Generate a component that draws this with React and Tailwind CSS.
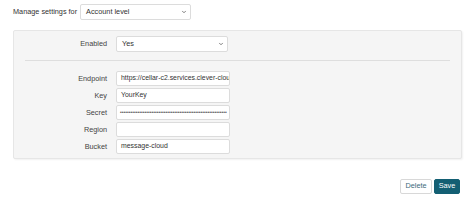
import { ChevronDown } from "lucide-react";

const Select = ({ value, width }) => (
  <div
    className={`flex items-center justify-between h-4 ${width} bg-white border border-[#dcdcdc] rounded-[2px] pl-[5px] pr-[3px] text-[#333]`}
  >
    <span>{value}</span>
    <ChevronDown className="w-[6px] h-[6px] text-[#555]" strokeWidth={3} />
  </div>
);

const Field = ({ label, value, secret }) => (
  <>
    <div className="text-right text-[#444] leading-[15px]">{label}</div>
    <div className="h-[15px] w-[114px] bg-white border border-[#dcdcdc] rounded-[2px] px-[2px] flex items-center overflow-hidden whitespace-nowrap text-[#333] text-[6.9px]">
      {secret ? (
        <span className="text-[5px] text-[#555] pl-[1px]">{"•".repeat(61)}</span>
      ) : (
        <span className="pl-[2px]">{value}</span>
      )}
    </div>
  </>
);

export default function App() {
  return (
    <div className="w-[474px] h-[209px] bg-white text-[7.3px] font-['Liberation_Sans',Arial,sans-serif] text-[#333] overflow-hidden">
      <div className="flex items-center gap-[3px] pl-[13px] pt-[4px]">
        <span className="text-[#333]">Manage settings for</span>
        <Select value="Account level" width="w-[111px]" />
      </div>

      <div className="mt-[10px] ml-[13px] w-[449px] bg-[#f5f5f5] border border-[#e6e6e6] rounded-[2px] shadow-[1px_1px_2px_rgba(0,0,0,0.06)] pt-[5px] pb-[4px]">
        <div className="grid grid-cols-[93px_auto] gap-x-[9px] items-center">
          <div className="text-right text-[#444]">Enabled</div>
          <Select value="Yes" width="w-[112px]" />
        </div>

        <div className="mx-[11px] mt-[8px] mb-[10px] border-t border-[#dedede]" />

        <div className="grid grid-cols-[93px_auto] gap-x-[9px] gap-y-[2px] items-center">
          <Field label="Endpoint" value="https://cellar-c2.services.clever-clou" />
          <Field label="Key" value="YourKey" />
          <Field label="Secret" secret />
          <Field label="Region" value="" />
          <Field label="Bucket" value="message-cloud" />
        </div>
      </div>

      <div className="flex justify-end gap-[2px] pr-[14px] mt-[20px]">
        <button className="h-[15px] w-[32px] bg-white border border-[#d8d8d8] rounded-[2px] text-[#3e6a7a]">
          Delete
        </button>
        <button className="h-[15px] w-[26px] bg-[#135f73] border border-[#135f73] rounded-[2px] text-white">
          Save
        </button>
      </div>
    </div>
  );
}
